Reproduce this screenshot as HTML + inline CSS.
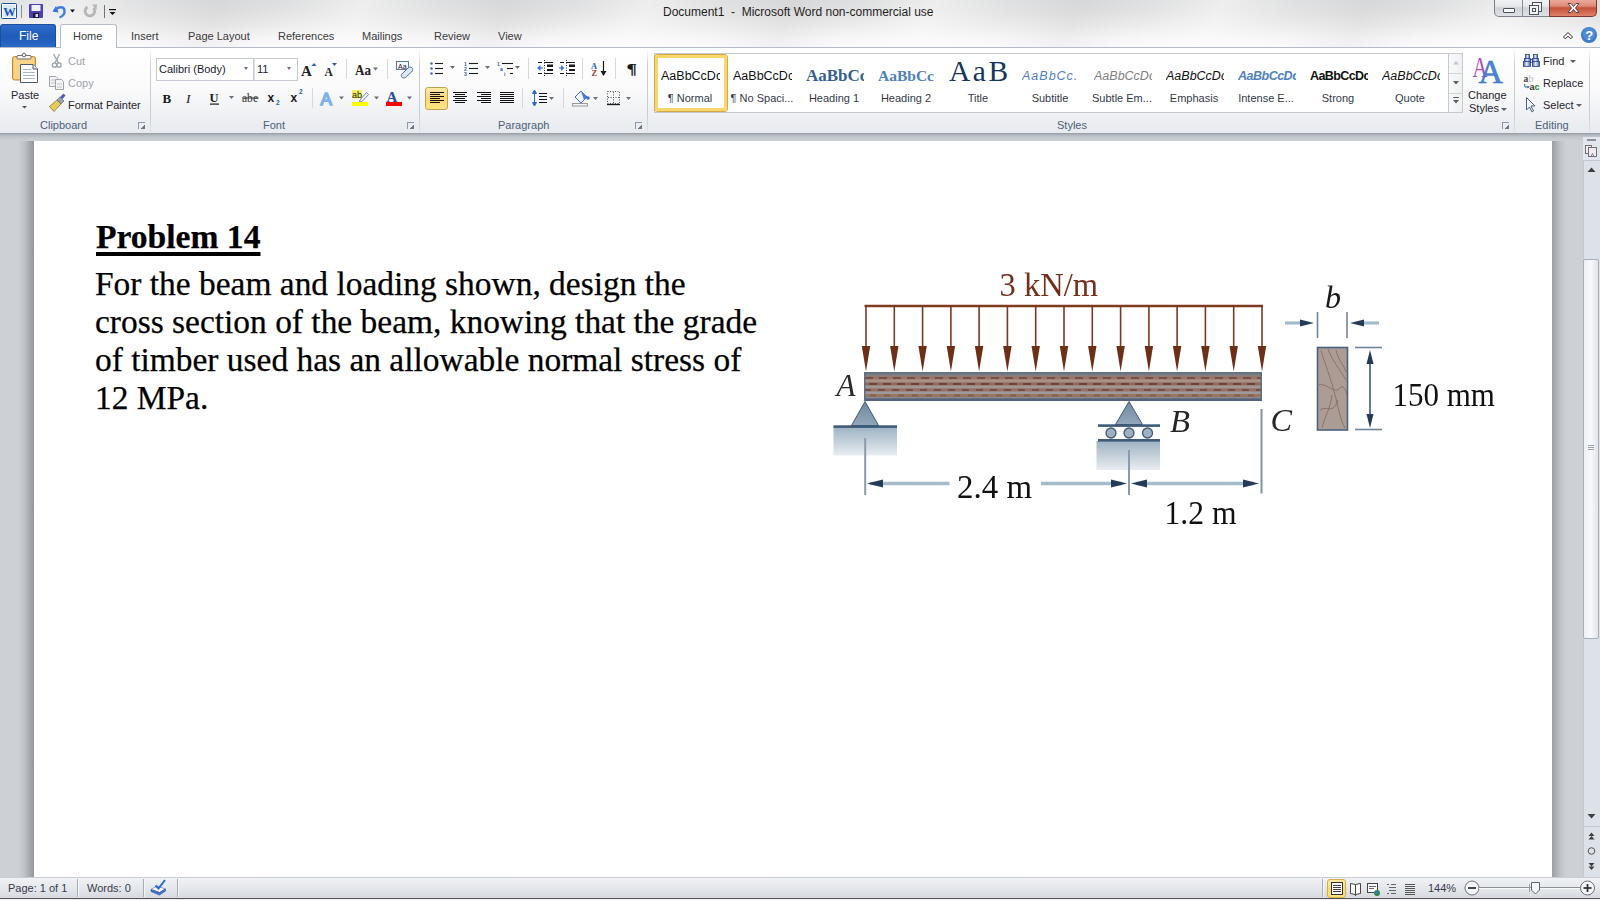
<!DOCTYPE html>
<html><head><meta charset="utf-8">
<style>
*{margin:0;padding:0;box-sizing:border-box}
html,body{width:1600px;height:900px;overflow:hidden;background:#cdd0d5;font-family:"Liberation Sans",sans-serif;font-size:11px;color:#1e2a3a}
.a{position:absolute}
#title{left:0;top:0;width:1600px;height:47px;background:repeating-linear-gradient(115deg,rgba(255,255,255,0) 0px,rgba(255,255,255,.45) 70px,rgba(255,255,255,0) 140px,rgba(0,0,0,.035) 200px,rgba(255,255,255,0) 260px),linear-gradient(180deg,#dedfe0 0%,#e3e3e4 25%,#ececed 55%,#f6f6f7 80%,#fbfbfb 100%)}
#tabs{display:none}
#ribbon{left:0;top:47px;width:1600px;height:86px;background:linear-gradient(180deg,#ffffff 0%,#fbfbfc 45%,#eef0f3 80%,#e7eaee 100%);border-top:1px solid #b6bcc6}
#rbot{left:0;top:133px;width:1600px;height:8px;background:linear-gradient(180deg,#8d939b 0,#a9aeb5 1px,#c3c7cd 4px,#cdd0d5 8px)}
.tab{position:absolute;top:30px;font-size:11px;color:#3b3b3b}
.glabel{position:absolute;top:119px;font-size:11px;color:#4e5f79}
.sep{position:absolute;top:49px;width:1px;height:83px;background:linear-gradient(180deg,rgba(200,205,212,0),#c8cdd4 20%,#c8cdd4 80%,rgba(200,205,212,.3))}
.dl{position:absolute;top:122px;width:7px;height:7px;border-left:1px solid #8e98a6;border-top:1px solid #8e98a6}
.dl:after{content:"";position:absolute;left:2px;top:2px;width:4px;height:4px;background:linear-gradient(135deg,transparent 45%,#6c7686 46%)}
.vsep{position:absolute;width:1px;background:#d3d7dd}
.dd{position:absolute;width:0;height:0;border-left:3px solid transparent;border-right:3px solid transparent;border-top:3px solid #5a5f66}
#page{left:34px;top:141px;width:1518px;height:736px;background:#fff}
#vscroll{left:1583px;top:137px;width:17px;height:740px;background:#dde1e8;border-left:1px solid #c5cad2}
#status{left:0;top:877px;width:1600px;height:23px;background:linear-gradient(180deg,#a4aab3 0,#f0f2f5 1px,#e4e7eb 50%,#d3d7dd 100%)}
.st{position:absolute;top:882px;font-size:11px;color:#3a3a4a}
.doc{position:absolute;font-family:"Liberation Serif",serif;color:#000;white-space:nowrap;-webkit-text-stroke:0.25px #000}
.sty{position:absolute;font-size:13px;white-space:nowrap;overflow:hidden}
.styl{position:absolute;top:92px;font-size:11px;color:#323a48;white-space:nowrap;text-align:center;width:72px}
</style></head><body>
<div id="title" class="a"></div>
<div id="tabs" class="a"></div>
<div id="ribbon" class="a"></div>
<div id="rbot" class="a"></div>
<div class="a" style="left:18px;top:141px;width:16px;height:736px;background:linear-gradient(90deg,rgba(150,155,162,0) 0%,rgba(150,155,162,.25) 40%,rgba(140,145,152,.8) 90%,#8f949b 100%)"></div>
<div class="a" style="left:1552px;top:141px;width:14px;height:736px;background:linear-gradient(90deg,#9aa0a7 0%,rgba(150,155,162,.7) 20%,rgba(150,155,162,.25) 60%,rgba(150,155,162,0) 100%)"></div>
<div id="page" class="a"></div>
<!-- scrollbar -->
<div id="vscroll" class="a"></div>
<div class="a" style="left:1583px;top:137px;width:17px;height:24px;background:#e3e6ec;border-bottom:1px solid #c3c8d0"></div>
<div class="a" style="left:1587px;top:139px;width:9px;height:2px;background:#8c9098"></div>
<svg class="a" style="left:1583px;top:143px" width="17" height="16" viewBox="0 0 17 16">
<rect x="2.5" y="2.5" width="6" height="8" fill="#f2eaf2" stroke="#666" stroke-width="0.9"/>
<rect x="5.5" y="4.5" width="8" height="9" fill="#f2eaf2" stroke="#666" stroke-width="0.9"/>
<path d="M8 13.5 L9.5 10.5 L11 13.5" fill="none" stroke="#666" stroke-width="0.8"/>
</svg>
<svg class="a" style="left:1583px;top:161px" width="17" height="716" viewBox="0 0 17 716">
<path d="M4.5 11 L12.5 11 L8.5 6.5 Z" fill="#3d3f44"/>
<rect x="0.5" y="98.5" width="15" height="379" rx="1.5" fill="url(#thumbg)" stroke="#a9afb8" stroke-width="1"/>
<defs><linearGradient id="thumbg" x1="0" y1="0" x2="1" y2="0"><stop offset="0" stop-color="#eef0f4"/><stop offset="0.5" stop-color="#f7f8fa"/><stop offset="1" stop-color="#dfe3ea"/></linearGradient></defs>
<g stroke="#9aa0a8" stroke-width="1"><line x1="5" y1="284.5" x2="11" y2="284.5"/><line x1="5" y1="286.5" x2="11" y2="286.5"/><line x1="5" y1="288.5" x2="11" y2="288.5"/></g>
<path d="M4.5 653 L12.5 653 L8.5 657.5 Z" fill="#3d3f44"/>
<line x1="0" y1="665.5" x2="17" y2="665.5" stroke="#c3c8d0"/>
<path d="M5.5 675 L11.5 675 L8.5 671.5 Z M5.5 678.5 L11.5 678.5 L8.5 675 Z" fill="#3d3f44"/>
<circle cx="8.5" cy="690" r="3.3" fill="none" stroke="#555" stroke-width="1"/>
<path d="M5.5 702 L11.5 702 L8.5 705.5 Z M5.5 705.5 L11.5 705.5 L8.5 709 Z" fill="#3d3f44"/>
</svg>
<div id="status" class="a"></div>

<!-- QAT -->
<svg class="a" style="left:0;top:0" width="130" height="24" viewBox="0 0 130 24">
<rect x="1.5" y="3.5" width="15" height="15" rx="1" fill="#fff" stroke="#1f4f9a" stroke-width="1"/>
<rect x="3" y="5" width="12" height="12" fill="#dbe7f7"/>
<text x="3.2" y="15.5" font-family="Liberation Serif" font-weight="bold" font-size="12.5" fill="#1552b8">W</text>
<line x1="21.5" y1="5" x2="21.5" y2="18" stroke="#8a8f96" stroke-width="1"/>
<rect x="29" y="4" width="14" height="14" rx="1" fill="#4a3fb5"/>
<rect x="31.5" y="5" width="9" height="6" fill="#eef2fb"/>
<rect x="33" y="13" width="6" height="5" fill="#1b1b3a"/>
<rect x="35.5" y="14" width="2.5" height="3" fill="#d8dce8"/>
<path d="M56 6 L52.5 11.5 L58.5 12.5 Z" fill="#2c6fd8"/>
<path d="M55.5 10 C58 6.5 64 6 64.5 10.5 C65 14 62 16.5 59.5 17.5" fill="none" stroke="#3b7ee0" stroke-width="2.4"/>
<path d="M70 9.5 L75 9.5 L72.5 12.5 Z" fill="#111"/>
<path d="M93.5 8 A4.8 4.8 0 1 1 87.5 7" fill="none" stroke="#b5b5b5" stroke-width="2.8"/>
<path d="M92 4.5 L97 4.5 L96.5 10 Z" fill="#b5b5b5"/>
<line x1="104.5" y1="5" x2="104.5" y2="18" stroke="#6f747b" stroke-width="1"/>
<rect x="109" y="9" width="7" height="1.2" fill="#111"/>
<path d="M109.5 12 L115.5 12 L112.5 15 Z" fill="#111"/>
</svg>
<!-- window buttons -->
<div class="a" style="left:1494px;top:-2px;width:56px;height:19px;border:1px solid #7c8088;border-top:none;border-radius:0 0 0 5px;background:linear-gradient(180deg,#f3f4f6 0%,#e7e9ec 45%,#cfd2d7 55%,#dfe2e6 100%)"></div>
<div class="a" style="left:1522px;top:0;width:1px;height:17px;background:#8a8e95"></div>
<div class="a" style="left:1549px;top:-2px;width:48px;height:19px;border:1px solid #7a3a30;border-top:none;border-radius:0 0 5px 0;background:linear-gradient(180deg,#efb3a6 0%,#df8a78 45%,#c4503a 55%,#e0826a 100%)"></div>
<svg class="a" style="left:1494px;top:0" width="106" height="20" viewBox="0 0 106 20">
<rect x="9.5" y="8.5" width="11" height="4" rx="0.5" fill="#f7f7f8" stroke="#4b5260" stroke-width="1"/>
<rect x="38.5" y="2.5" width="9" height="9" fill="#f2f2f4" stroke="#4b5260" stroke-width="1"/>
<rect x="35.5" y="5.5" width="9" height="9" fill="#f2f2f4" stroke="#4b5260" stroke-width="1"/>
<rect x="38.5" y="8.5" width="3" height="3" fill="none" stroke="#4b5260" stroke-width="1"/>
<path d="M74 3.5 L77 3.5 L79.5 6.5 L82 3.5 L85 3.5 L81.5 8 L85 12.5 L82 12.5 L79.5 9.5 L77 12.5 L74 12.5 L77.5 8 Z" fill="#f7f4f4" stroke="#4e3a3a" stroke-width="0.9"/>
</svg>
<svg class="a" style="left:1560px;top:26px" width="40" height="20" viewBox="0 0 40 20">
<path d="M3.5 11 L8 6.5 L12.5 11 L10.8 12.8 L8 10.2 L5.2 12.8 Z" fill="#fff" stroke="#2a2a2a" stroke-width="1" stroke-linejoin="round"/>
<circle cx="29" cy="9" r="8" fill="#3c78c8"/>
<circle cx="29" cy="8" r="6.5" fill="#4f8ad6"/>
<text x="25.2" y="14" font-family="Liberation Sans" font-weight="bold" font-size="13" fill="#fff">?</text>
</svg>
<!-- title text -->
<div class="a" style="left:663px;top:5px;font-size:12px;color:#1f1f1f;white-space:nowrap">Document1&nbsp; - &nbsp;Microsoft Word non-commercial use</div>

<!-- tabs -->
<div class="a" style="left:0;top:24px;width:56px;height:23px;background:linear-gradient(180deg,#2f6bcb 0%,#1f5bb9 50%,#2b69c6 100%);border-radius:3px 3px 0 0;border:1px solid #1c4e9c;border-bottom:none"></div>
<div class="a" style="left:19px;top:29px;font-size:12px;color:#fff">File</div>
<div class="a" style="left:60px;top:24px;width:57px;height:24px;background:#fff;border:1px solid #b6bcc6;border-bottom:none;border-radius:3px 3px 0 0"></div>
<div class="tab" style="left:73px">Home</div>
<div class="tab" style="left:131px">Insert</div>
<div class="tab" style="left:188px">Page Layout</div>
<div class="tab" style="left:278px">References</div>
<div class="tab" style="left:362px">Mailings</div>
<div class="tab" style="left:434px">Review</div>
<div class="tab" style="left:498px">View</div>

<!-- clipboard group -->
<svg class="a" style="left:0;top:48px" width="150" height="70" viewBox="0 48 150 70">
<rect x="12.5" y="56.5" width="23" height="23.5" rx="2" fill="#f2c56c" stroke="#c08a35" stroke-width="1"/>
<rect x="14" y="58" width="20" height="21" fill="#f7d588"/>
<rect x="17" y="55.5" width="14" height="3.5" rx="1" fill="#f4f4f4" stroke="#6f6f6f" stroke-width="1"/>
<circle cx="24" cy="55" r="1.8" fill="#f4f4f4" stroke="#6f6f6f" stroke-width="1"/>
<path d="M20.5 64.5 L33 64.5 L37.5 69 L37.5 82.5 L20.5 82.5 Z" fill="#fff" stroke="#4d5b73" stroke-width="1"/>
<path d="M33 64.5 L33 69 L37.5 69" fill="#e3e8ef" stroke="#4d5b73" stroke-width="1"/>
<g stroke="#a9b6c8" stroke-width="1"><line x1="23" y1="69.5" x2="31" y2="69.5"/><line x1="23" y1="72.5" x2="35" y2="72.5"/><line x1="23" y1="75.5" x2="35" y2="75.5"/><line x1="23" y1="78.5" x2="35" y2="78.5"/></g>
<path d="M22 106 L27 106 L24.5 108.5 Z" fill="#4a4f57"/>
<g stroke="#9aa0a8" stroke-width="1.3" fill="none"><line x1="53.5" y1="54" x2="58.5" y2="63"/><line x1="59.5" y1="54" x2="55" y2="63"/><circle cx="54.5" cy="65" r="2.2"/><circle cx="59" cy="65" r="2.2"/></g>
<path d="M49.5 76.5 L56 76.5 L58 78.5 L58 86.5 L49.5 86.5 Z" fill="#f4f4f4" stroke="#a0a5ad" stroke-width="1"/>
<path d="M55.5 79.5 L61.5 79.5 L63.5 81.5 L63.5 89.5 L55.5 89.5 Z" fill="#f4f4f4" stroke="#a0a5ad" stroke-width="1"/>
<g stroke="#c0c4ca" stroke-width="1"><line x1="51" y1="80" x2="55" y2="80"/><line x1="51" y1="83" x2="55" y2="83"/><line x1="57" y1="84" x2="62" y2="84"/><line x1="57" y1="87" x2="62" y2="87"/></g>
<path d="M49.5 106.5 L57 100 L61 104 L54 111.5 Z" fill="#e8c95c" stroke="#8d7a2a" stroke-width="0.8"/>
<path d="M57 100 L60 97 L64 101 L61 104 Z" fill="#9aa2ad" stroke="#555" stroke-width="0.6"/>
<path d="M60 97 L63.5 93.5 L65.5 95.5 L62.5 99 Z" fill="#5a56c0"/>
</svg>
<div class="a" style="left:11px;top:89px;font-size:11px;color:#26262b">Paste</div>
<div class="a" style="left:68px;top:55px;font-size:11px;color:#9ea3ab">Cut</div>
<div class="a" style="left:68px;top:77px;font-size:11px;color:#9ea3ab">Copy</div>
<div class="a" style="left:68px;top:99px;font-size:11px;color:#26262b">Format Painter</div>
<!-- font group -->
<div class="a" style="left:156px;top:58px;width:98px;height:23px;background:#fff;border:1px solid #c5cad2"></div>
<div class="a" style="left:254px;top:58px;width:44px;height:23px;background:#fff;border:1px solid #c5cad2;border-left:1px solid #dde0e5"></div>
<div class="a" style="left:159px;top:63px;font-size:11px;color:#1b1b2e">Calibri (Body)</div>
<div class="a" style="left:257px;top:63px;font-size:11px;color:#1b1b2e">11</div>
<div class="dd" style="left:244px;top:67px;border-left-width:2.5px;border-right-width:2.5px;border-top-color:#6a6f78"></div>
<div class="dd" style="left:287px;top:67px;border-left-width:2.5px;border-right-width:2.5px;border-top-color:#6a6f78"></div>
<svg class="a" style="left:150px;top:48px" width="270" height="70" viewBox="150 48 270 70">
<text x="301" y="75.5" font-family="Liberation Serif" font-weight="bold" font-size="15" fill="#222">A</text>
<path d="M311.5 66 L314 63 L316.5 66 Z" fill="#2a5cb0"/>
<text x="324.5" y="75.5" font-family="Liberation Serif" font-weight="bold" font-size="11.5" fill="#222">A</text>
<path d="M332 63 L337 63 L334.5 66 Z" fill="#2a5cb0"/>
<line x1="346.5" y1="59" x2="346.5" y2="79" stroke="#d5d9de"/>
<text x="355" y="74.5" font-family="Liberation Serif" font-weight="bold" font-size="14" fill="#222" textLength="16" lengthAdjust="spacingAndGlyphs">Aa</text>
<path d="M373 67.5 L378 67.5 L375.5 70.5 Z" fill="#6a6f78"/>
<line x1="387.5" y1="59" x2="387.5" y2="79" stroke="#d5d9de"/>
<rect x="396.5" y="61.5" width="12" height="8" fill="#f4f7fb" stroke="#5a78a8" stroke-width="1"/>
<text x="398" y="68.5" font-family="Liberation Sans" font-size="7" fill="#222">Aa</text>
<path d="M402 74 L408 68 C409.5 66.5 412 67 412.5 68.5 C413 70 412.5 71 411.5 72 L405.5 77.5 C404 78.5 402 78 401.5 76.5 C401 75.5 401.3 74.7 402 74 Z" fill="#dde6f2" stroke="#4e6f9e" stroke-width="1"/>
<text x="162.5" y="102.5" font-family="Liberation Serif" font-weight="bold" font-size="13" fill="#1a1a1a">B</text>
<text x="186" y="102.5" font-family="Liberation Serif" font-style="italic" font-size="13.5" fill="#1a1a1a">I</text>
<text x="209.5" y="102" font-family="Liberation Serif" font-weight="bold" font-size="12.5" fill="#1a1a1a">U</text>
<rect x="210" y="103.5" width="9" height="1.2" fill="#1a1a1a"/>
<path d="M229 96 L234 96 L231.5 99 Z" fill="#6a6f78"/>
<text x="242" y="101.5" font-family="Liberation Serif" font-size="12" fill="#333" textLength="16" lengthAdjust="spacingAndGlyphs">abe</text>
<rect x="242" y="97.5" width="16.5" height="1" fill="#333"/>
<text x="267.5" y="102" font-family="Liberation Sans" font-weight="bold" font-size="12" fill="#1a1a1a">x</text>
<text x="276" y="104.5" font-family="Liberation Sans" font-weight="bold" font-size="6.5" fill="#2a5cb0">2</text>
<text x="290.5" y="102" font-family="Liberation Sans" font-weight="bold" font-size="12" fill="#1a1a1a">x</text>
<text x="299" y="93.5" font-family="Liberation Sans" font-weight="bold" font-size="6.5" fill="#2a5cb0">2</text>
<line x1="312.5" y1="88" x2="312.5" y2="108" stroke="#d5d9de"/>
<text x="320.5" y="105" font-family="Liberation Sans" font-size="17" fill="#e3f1fc" stroke="#7fb2ea" stroke-width="1.6">A</text>
<path d="M339 96.5 L344 96.5 L341.5 99.5 Z" fill="#6a6f78"/>
<rect x="352" y="90" width="10" height="8.5" fill="#f3f05a"/>
<text x="352" y="98" font-family="Liberation Sans" font-size="9" fill="#222">ab</text>
<path d="M360 100 L366.5 92.5 L368.5 94.5 L362 101.5 L359.5 102 Z" fill="#eef3fa" stroke="#5a6f8f" stroke-width="0.8"/>
<rect x="352" y="102" width="16" height="4" fill="#ffff00"/>
<path d="M374 96.5 L379 96.5 L376.5 99.5 Z" fill="#6a6f78"/>
<text x="386.5" y="101.5" font-family="Liberation Serif" font-weight="bold" font-size="15" fill="#2b4a9a">A</text>
<rect x="386" y="102" width="16" height="4" fill="#ff0000"/>
<path d="M407 96.5 L412 96.5 L409.5 99.5 Z" fill="#6a6f78"/>
</svg>
<!-- paragraph group -->
<div class="a" style="left:425px;top:87px;width:23px;height:23px;border:1px solid #c2a24c;border-radius:3px;background:linear-gradient(180deg,#fde9a4 0%,#fcd874 50%,#fde37f 100%)"></div>
<svg class="a" style="left:420px;top:48px" width="230" height="70" viewBox="420 48 230 70">
<g fill="#3a6fc8"><circle cx="431.5" cy="63.5" r="1.3"/><circle cx="431.5" cy="68.5" r="1.3"/><circle cx="431.5" cy="73.5" r="1.3"/></g>
<g stroke="#1a1a1a" stroke-width="1.1"><line x1="435" y1="63.5" x2="443" y2="63.5"/><line x1="435" y1="68.5" x2="443" y2="68.5"/><line x1="435" y1="73.5" x2="443" y2="73.5"/></g>
<path d="M450 66 L455 66 L452.5 69 Z" fill="#6a6f78"/>
<g fill="#2a5cb0" font-family="Liberation Sans" font-weight="bold" font-size="5"><text x="464" y="66">1</text><text x="464" y="71">2</text><text x="464" y="76">3</text></g>
<g stroke="#1a1a1a" stroke-width="1.1"><line x1="469" y1="63.5" x2="478" y2="63.5"/><line x1="469" y1="68.5" x2="478" y2="68.5"/><line x1="469" y1="73.5" x2="478" y2="73.5"/></g>
<path d="M485 66 L490 66 L487.5 69 Z" fill="#6a6f78"/>
<g fill="#2a5cb0" font-family="Liberation Sans" font-weight="bold" font-size="5"><text x="497" y="66">1</text><text x="500" y="71">a</text><text x="504" y="76">i</text></g>
<g stroke="#1a1a1a" stroke-width="1.1"><line x1="502" y1="63.5" x2="513" y2="63.5"/><line x1="507" y1="68.5" x2="513" y2="68.5"/><line x1="510" y1="73.5" x2="513" y2="73.5"/></g>
<path d="M515 66 L520 66 L517.5 69 Z" fill="#6a6f78"/>
<line x1="528.5" y1="58" x2="528.5" y2="79" stroke="#d5d9de"/>
<g stroke="#1a1a1a" stroke-width="1"><line x1="544" y1="62.5" x2="553" y2="62.5"/><line x1="547" y1="66.5" x2="553" y2="66.5"/><line x1="547" y1="69.5" x2="553" y2="69.5"/><line x1="544" y1="73.5" x2="553" y2="73.5"/><line x1="538" y1="62.5" x2="542" y2="62.5"/><line x1="538" y1="73.5" x2="542" y2="73.5"/></g>
<rect x="547" y="64.5" width="6" height="2" fill="#1a1a1a"/><rect x="547" y="69" width="6" height="2" fill="#1a1a1a"/>
<line x1="544.5" y1="60" x2="544.5" y2="76" stroke="#1a1a1a" stroke-width="1" stroke-dasharray="1 1.5"/>
<path d="M537 68 L540.5 65 L540.5 71 Z" fill="#3a78d8"/><line x1="539" y1="68" x2="543" y2="68" stroke="#3a78d8" stroke-width="1.2"/>
<g stroke="#1a1a1a" stroke-width="1"><line x1="566" y1="62.5" x2="575" y2="62.5"/><line x1="569" y1="66.5" x2="575" y2="66.5"/><line x1="569" y1="69.5" x2="575" y2="69.5"/><line x1="566" y1="73.5" x2="575" y2="73.5"/><line x1="560" y1="62.5" x2="564" y2="62.5"/><line x1="560" y1="73.5" x2="564" y2="73.5"/></g>
<rect x="569" y="64.5" width="6" height="2" fill="#1a1a1a"/><rect x="569" y="69" width="6" height="2" fill="#1a1a1a"/>
<line x1="566.5" y1="60" x2="566.5" y2="76" stroke="#1a1a1a" stroke-width="1" stroke-dasharray="1 1.5"/>
<path d="M564.5 68 L561 65 L561 71 Z" fill="#3a78d8"/><line x1="559" y1="68" x2="562" y2="68" stroke="#3a78d8" stroke-width="1.2"/>
<line x1="582.5" y1="58" x2="582.5" y2="79" stroke="#d5d9de"/>
<text x="591" y="68.5" font-family="Liberation Serif" font-weight="bold" font-size="8.5" fill="#2a5cb0">A</text>
<text x="591.5" y="76" font-family="Liberation Serif" font-weight="bold" font-size="8.5" fill="#a33a2a">Z</text>
<line x1="603.5" y1="61" x2="603.5" y2="75" stroke="#1a1a1a" stroke-width="1.2"/>
<path d="M600.5 71 L606.5 71 L603.5 76 Z" fill="#1a1a1a"/>
<line x1="615.5" y1="58" x2="615.5" y2="79" stroke="#d5d9de"/>
<text x="626.5" y="74" font-family="Liberation Serif" font-weight="bold" font-size="15" fill="#1a1a1a" textLength="10.5" lengthAdjust="spacingAndGlyphs">&#182;</text>
<g stroke="#111" stroke-width="1"><line x1="430" y1="92.5" x2="444" y2="92.5"/><line x1="430" y1="94.5" x2="440" y2="94.5"/><line x1="430" y1="96.5" x2="444" y2="96.5"/><line x1="430" y1="98.5" x2="440" y2="98.5"/><line x1="430" y1="100.5" x2="444" y2="100.5"/><line x1="430" y1="102.5" x2="440" y2="102.5"/></g>
<g stroke="#111" stroke-width="1"><line x1="453" y1="92.5" x2="467" y2="92.5"/><line x1="455" y1="94.5" x2="465" y2="94.5"/><line x1="453" y1="96.5" x2="467" y2="96.5"/><line x1="455" y1="98.5" x2="465" y2="98.5"/><line x1="453" y1="100.5" x2="467" y2="100.5"/><line x1="455" y1="102.5" x2="465" y2="102.5"/></g>
<g stroke="#111" stroke-width="1"><line x1="477" y1="92.5" x2="491" y2="92.5"/><line x1="481" y1="94.5" x2="491" y2="94.5"/><line x1="477" y1="96.5" x2="491" y2="96.5"/><line x1="481" y1="98.5" x2="491" y2="98.5"/><line x1="477" y1="100.5" x2="491" y2="100.5"/><line x1="481" y1="102.5" x2="491" y2="102.5"/></g>
<g stroke="#111" stroke-width="1"><line x1="500" y1="92.5" x2="514" y2="92.5"/><line x1="500" y1="94.5" x2="514" y2="94.5"/><line x1="500" y1="96.5" x2="514" y2="96.5"/><line x1="500" y1="98.5" x2="514" y2="98.5"/><line x1="500" y1="100.5" x2="514" y2="100.5"/><line x1="500" y1="102.5" x2="514" y2="102.5"/></g>
<line x1="522.5" y1="88" x2="522.5" y2="108" stroke="#d5d9de"/>
<g stroke="#2a6ad0" stroke-width="1" fill="#2a6ad0"><line x1="534.5" y1="92" x2="534.5" y2="104"/><path d="M532.5 93.5 L534.5 90 L536.5 93.5 Z"/><path d="M532.5 102.5 L534.5 106 L536.5 102.5 Z"/></g>
<g stroke="#111" stroke-width="1"><line x1="539" y1="93.5" x2="547" y2="93.5"/><line x1="539" y1="96.5" x2="547" y2="96.5"/><line x1="539" y1="99.5" x2="547" y2="99.5"/><line x1="539" y1="102.5" x2="547" y2="102.5"/></g>
<path d="M549 97 L554 97 L551.5 100 Z" fill="#6a6f78"/>
<line x1="563.5" y1="88" x2="563.5" y2="108" stroke="#d5d9de"/>
<path d="M575 97 L581 91 L587 97 L581 103 Z" fill="#f4f6fa" stroke="#3a6fc8" stroke-width="1"/>
<path d="M581 91 L587 97 L584 100 Z" fill="#4a80d0"/>
<circle cx="588" cy="98" r="1.8" fill="#3a6fc8"/>
<rect x="572.5" y="103.5" width="15" height="2.5" fill="#f6f6f6" stroke="#999" stroke-width="1"/>
<path d="M593 97 L598 97 L595.5 100 Z" fill="#6a6f78"/>
<g stroke="#555" stroke-width="1" stroke-dasharray="1 1.5" fill="none"><rect x="607.5" y="91.5" width="12" height="12"/><line x1="613.5" y1="92" x2="613.5" y2="103"/><line x1="608" y1="97.5" x2="619" y2="97.5"/></g>
<line x1="607" y1="104.5" x2="620" y2="104.5" stroke="#1a1a1a" stroke-width="1.3"/>
<path d="M626 97 L631 97 L628.5 100 Z" fill="#6a6f78"/>
</svg>
<!-- styles group -->
<div class="a" style="left:654px;top:53px;width:809px;height:60px;background:#fff;border:1px solid #c5cad2"></div>
<div class="a" style="left:655px;top:55px;width:72px;height:56px;border:3px solid #f9d66b;border-radius:3px;box-shadow:0 0 0 1px #d6a948"></div>
<div class="a" style="left:1448px;top:53px;width:15px;height:60px;border:1px solid #c5cad2;border-radius:0 2px 2px 0;background:linear-gradient(90deg,#f8f9fa,#eef0f3)"></div>
<div class="a" style="left:1449px;top:73px;width:14px;height:1px;background:#cfd3da"></div>
<div class="a" style="left:1449px;top:93px;width:14px;height:1px;background:#cfd3da"></div>
<svg class="a" style="left:1448px;top:53px" width="16" height="60" viewBox="0 0 16 60">
<path d="M5 11.5 L11 11.5 L8 8 Z" fill="#c3c7cd"/>
<path d="M5 28 L11 28 L8 31.5 Z" fill="#5a5f66"/>
<rect x="5" y="44" width="6" height="1" fill="#5a5f66"/>
<path d="M5 47 L11 47 L8 50.5 Z" fill="#5a5f66"/>
</svg>
<div class="sty" style="left:661px;top:69px;width:59px;color:#111;font-size:12.5px">AaBbCcDc</div>
<div class="sty" style="left:733px;top:69px;width:59px;color:#111;font-size:12.5px">AaBbCcDc</div>
<div class="sty" style="left:806px;top:66px;width:58px;color:#365f91;font-family:'Liberation Serif',serif;font-weight:bold;font-size:17px">AaBbCc</div>
<div class="sty" style="left:878px;top:67px;width:58px;color:#4f81bd;font-family:'Liberation Serif',serif;font-weight:bold;font-size:15.5px">AaBbCc</div>
<div class="sty" style="left:949px;top:55px;width:60px;color:#17365d;font-family:'Liberation Serif',serif;font-size:29.5px;line-height:32px;letter-spacing:2.5px">AaB</div>
<div class="sty" style="left:1022px;top:69px;width:58px;color:#4f81bd;font-style:italic;font-size:12.5px;letter-spacing:1px">AaBbCc.</div>
<div class="sty" style="left:1094px;top:69px;width:58px;color:#808080;font-style:italic;font-size:12.5px">AaBbCcDc</div>
<div class="sty" style="left:1166px;top:69px;width:58px;color:#111;font-style:italic;font-size:12.5px">AaBbCcDc</div>
<div class="sty" style="left:1238px;top:69px;width:58px;color:#4f81bd;font-style:italic;font-weight:bold;font-size:12.5px;letter-spacing:-0.5px">AaBbCcDc</div>
<div class="sty" style="left:1310px;top:69px;width:58px;color:#111;font-weight:bold;font-size:12.5px;letter-spacing:-0.6px">AaBbCcDc</div>
<div class="sty" style="left:1382px;top:69px;width:58px;color:#111;font-style:italic;font-size:12.5px">AaBbCcDc</div>
<div class="styl" style="left:654px">&#182; Normal</div>
<div class="styl" style="left:726px">&#182; No Spaci...</div>
<div class="styl" style="left:798px">Heading 1</div>
<div class="styl" style="left:870px">Heading 2</div>
<div class="styl" style="left:942px">Title</div>
<div class="styl" style="left:1014px">Subtitle</div>
<div class="styl" style="left:1086px">Subtle Em...</div>
<div class="styl" style="left:1158px">Emphasis</div>
<div class="styl" style="left:1230px">Intense E...</div>
<div class="styl" style="left:1302px">Strong</div>
<div class="styl" style="left:1374px">Quote</div>
<svg class="a" style="left:1465px;top:50px" width="50" height="35" viewBox="1465 50 50 35">
<text x="1472.5" y="76.5" font-family="Liberation Serif" font-size="30" fill="#b04cc0" textLength="15" lengthAdjust="spacingAndGlyphs">A</text>
<text x="1478.5" y="82.5" font-family="Liberation Serif" font-size="33" fill="#4a86d8" stroke="#2f6cc4" stroke-width="0.5" textLength="24.5" lengthAdjust="spacingAndGlyphs">A</text>
</svg>
<div class="a" style="left:1468px;top:89px;font-size:11px;color:#26262b">Change</div>
<div class="a" style="left:1469px;top:102px;font-size:11px;color:#26262b">Styles</div>
<div class="dd" style="left:1501px;top:108px;border-top-color:#5a5f66"></div>
<!-- editing group -->
<svg class="a" style="left:1520px;top:50px" width="70" height="65" viewBox="1520 50 70 65">
<defs><linearGradient id="binog" x1="0" y1="0" x2="1" y2="0"><stop offset="0" stop-color="#3d5fa8"/><stop offset="0.45" stop-color="#e8eefa"/><stop offset="1" stop-color="#3a5aa0"/></linearGradient></defs>
<g fill="url(#binog)" stroke="#2a4890" stroke-width="0.8">
<rect x="1525.5" y="54.5" width="4" height="4"/><rect x="1533.5" y="54.5" width="4" height="4"/>
<rect x="1524.5" y="58.5" width="6" height="3"/><rect x="1532.5" y="58.5" width="6" height="3"/>
<rect x="1523.5" y="61.5" width="7" height="5"/><rect x="1532.5" y="61.5" width="7" height="5"/>
<rect x="1530.5" y="59.5" width="2" height="3"/>
</g>
<text x="1523.5" y="82" font-family="Liberation Serif" font-weight="bold" font-size="9.5" fill="#444">a</text>
<text x="1528.5" y="82" font-family="Liberation Serif" font-size="10" fill="#b8b8b8">b</text>
<path d="M1524.5 84 L1525 87 L1528.5 87" fill="none" stroke="#2f5aa8" stroke-width="1"/>
<path d="M1527.5 85.5 L1529.5 87 L1527.5 88.5 Z" fill="#2f5aa8"/>
<text x="1529.5" y="90" font-family="Liberation Sans" font-weight="bold" font-size="9" fill="#333">a</text>
<text x="1534.5" y="90" font-family="Liberation Sans" font-weight="bold" font-size="9" fill="#1a8a1a">c</text>
<path d="M1526.5 97.5 L1526.5 110 L1529.5 107 L1532 112 L1533.5 111 L1531 106 L1535 106 Z" fill="#f4f7fc" stroke="#3b5078" stroke-width="0.9" stroke-linejoin="round"/>
</svg>
<div class="a" style="left:1543px;top:55px;font-size:11px;color:#26262b">Find</div>
<div class="dd" style="left:1570px;top:60px;border-top-color:#5a5f66"></div>
<div class="a" style="left:1543px;top:77px;font-size:11px;color:#26262b">Replace</div>
<div class="a" style="left:1543px;top:99px;font-size:11px;color:#26262b">Select</div>
<div class="dd" style="left:1576px;top:104px;border-top-color:#5a5f66"></div>
<!-- group labels -->
<div class="glabel" style="left:40px">Clipboard</div>
<div class="glabel" style="left:263px">Font</div>
<div class="glabel" style="left:498px">Paragraph</div>
<div class="glabel" style="left:1057px">Styles</div>
<div class="glabel" style="left:1535px">Editing</div>
<div class="sep" style="left:150px"></div>
<div class="sep" style="left:419px"></div>
<div class="sep" style="left:647px"></div>
<div class="sep" style="left:1514px"></div>
<div class="sep" style="left:1589px"></div>
<div class="dl" style="left:138px"></div>
<div class="dl" style="left:407px"></div>
<div class="dl" style="left:635px"></div>
<div class="dl" style="left:1502px"></div>

<!-- document text -->
<div class="doc" style="left:96px;top:218px;font-size:33.6px;font-weight:bold;text-decoration:underline;text-decoration-thickness:4px;text-underline-offset:4px">Problem 14</div>
<div class="doc" style="left:95px;top:265px;font-size:33.45px;line-height:38.15px">For the beam and loading shown, design the<br>cross section of the beam, knowing that the grade<br>of timber used has an allowable normal stress of<br>12 MPa.</div>

<!-- diagram -->
<svg class="a" style="left:0;top:0;filter:blur(0.35px)" width="1600" height="900" viewBox="0 0 1600 900">
<defs>
<linearGradient id="gnd" x1="0" y1="0" x2="0" y2="1"><stop offset="0" stop-color="#9fb3c4"/><stop offset="0.5" stop-color="#c3d0da"/><stop offset="1" stop-color="#e8edf1"/></linearGradient>
<linearGradient id="tri" x1="0" y1="0" x2="0" y2="1"><stop offset="0" stop-color="#6f889f"/><stop offset="1" stop-color="#93a8ba"/></linearGradient>
<pattern id="wood" x="864" y="372" width="14" height="29" patternUnits="userSpaceOnUse">
<rect width="14" height="29" fill="#967c70"/>
<rect y="0" width="14" height="2.5" fill="#65727f"/>
<rect y="2.5" width="14" height="2" fill="#7f7f85"/>
<rect y="4.5" width="14" height="3" fill="#98766a"/><rect x="1" y="5" width="8" height="2" fill="#7a4e42"/>
<rect y="7.5" width="14" height="3" fill="#a99186"/>
<rect y="10.5" width="14" height="3" fill="#8f6b5e"/><rect x="5" y="11" width="8" height="2" fill="#6e4238"/>
<rect y="13.5" width="14" height="3" fill="#a09793"/>
<rect y="16.5" width="14" height="3" fill="#947266"/><rect x="0" y="17" width="7" height="2" fill="#784e43"/>
<rect y="19.5" width="14" height="2.5" fill="#9e999c"/>
<rect y="22" width="14" height="3" fill="#98765f"/><rect x="6" y="22.5" width="6" height="2" fill="#84604c"/>
<rect y="25" width="14" height="1.5" fill="#858894"/>
<rect y="26.5" width="14" height="2.5" fill="#52637b"/>
</pattern>
</defs>
<text x="999.5" y="296.3" font-family="Liberation Serif" font-size="33.5" fill="#73301a" textLength="98.5" lengthAdjust="spacingAndGlyphs">3 kN/m</text>
<line x1="864.5" y1="306" x2="1263" y2="306" stroke="#7f3b1f" stroke-width="2.4"/>
<line x1="866.0" y1="306" x2="866.0" y2="348" stroke="#7a3a20" stroke-width="1.6"/>
<path d="M861.8 346 L870.2 346 L866.0 371.5 Z" fill="#6e2f17"/>
<line x1="894.3" y1="306" x2="894.3" y2="348" stroke="#7a3a20" stroke-width="1.6"/>
<path d="M890.1 346 L898.5 346 L894.3 371.5 Z" fill="#6e2f17"/>
<line x1="922.6" y1="306" x2="922.6" y2="348" stroke="#7a3a20" stroke-width="1.6"/>
<path d="M918.4 346 L926.8 346 L922.6 371.5 Z" fill="#6e2f17"/>
<line x1="950.9" y1="306" x2="950.9" y2="348" stroke="#7a3a20" stroke-width="1.6"/>
<path d="M946.7 346 L955.1 346 L950.9 371.5 Z" fill="#6e2f17"/>
<line x1="979.1" y1="306" x2="979.1" y2="348" stroke="#7a3a20" stroke-width="1.6"/>
<path d="M974.9 346 L983.3 346 L979.1 371.5 Z" fill="#6e2f17"/>
<line x1="1007.4" y1="306" x2="1007.4" y2="348" stroke="#7a3a20" stroke-width="1.6"/>
<path d="M1003.2 346 L1011.6 346 L1007.4 371.5 Z" fill="#6e2f17"/>
<line x1="1035.7" y1="306" x2="1035.7" y2="348" stroke="#7a3a20" stroke-width="1.6"/>
<path d="M1031.5 346 L1039.9 346 L1035.7 371.5 Z" fill="#6e2f17"/>
<line x1="1064.0" y1="306" x2="1064.0" y2="348" stroke="#7a3a20" stroke-width="1.6"/>
<path d="M1059.8 346 L1068.2 346 L1064.0 371.5 Z" fill="#6e2f17"/>
<line x1="1092.3" y1="306" x2="1092.3" y2="348" stroke="#7a3a20" stroke-width="1.6"/>
<path d="M1088.1 346 L1096.5 346 L1092.3 371.5 Z" fill="#6e2f17"/>
<line x1="1120.6" y1="306" x2="1120.6" y2="348" stroke="#7a3a20" stroke-width="1.6"/>
<path d="M1116.4 346 L1124.8 346 L1120.6 371.5 Z" fill="#6e2f17"/>
<line x1="1148.9" y1="306" x2="1148.9" y2="348" stroke="#7a3a20" stroke-width="1.6"/>
<path d="M1144.7 346 L1153.1 346 L1148.9 371.5 Z" fill="#6e2f17"/>
<line x1="1177.1" y1="306" x2="1177.1" y2="348" stroke="#7a3a20" stroke-width="1.6"/>
<path d="M1172.9 346 L1181.3 346 L1177.1 371.5 Z" fill="#6e2f17"/>
<line x1="1205.4" y1="306" x2="1205.4" y2="348" stroke="#7a3a20" stroke-width="1.6"/>
<path d="M1201.2 346 L1209.6 346 L1205.4 371.5 Z" fill="#6e2f17"/>
<line x1="1233.7" y1="306" x2="1233.7" y2="348" stroke="#7a3a20" stroke-width="1.6"/>
<path d="M1229.5 346 L1237.9 346 L1233.7 371.5 Z" fill="#6e2f17"/>
<line x1="1262.0" y1="306" x2="1262.0" y2="348" stroke="#7a3a20" stroke-width="1.6"/>
<path d="M1257.8 346 L1266.2 346 L1262.0 371.5 Z" fill="#6e2f17"/>
<rect x="864" y="372" width="398" height="29" fill="url(#wood)"/>
<rect x="864" y="372" width="1.5" height="29" fill="#5a6f84"/><rect x="1260.5" y="372" width="1.5" height="29" fill="#5a6f84"/>
<text x="836.5" y="396" font-family="Liberation Serif" font-style="italic" font-size="32" fill="#2a2a2a" textLength="19" lengthAdjust="spacingAndGlyphs">A</text>
<!-- support A -->
<path d="M865 401.5 L851.5 425.5 L878.5 425.5 Z" fill="url(#tri)" stroke="#3f5a74" stroke-width="1"/>
<rect x="833.5" y="427" width="63.5" height="28.5" fill="url(#gnd)"/>
<rect x="833.5" y="425.3" width="63.5" height="2.6" fill="#3e5b7a"/>
<line x1="865.2" y1="438" x2="865.2" y2="495" stroke="#8a9bb0" stroke-width="2"/>
<!-- support B -->
<path d="M1129 401.5 L1115.5 424.5 L1142.5 424.5 Z" fill="url(#tri)" stroke="#3f5a74" stroke-width="1"/>
<rect x="1098" y="424.3" width="62" height="2.6" fill="#3e5b7a"/>
<circle cx="1111" cy="433" r="5" fill="#9fb1c1" stroke="#3f5a74" stroke-width="1.3"/>
<circle cx="1129" cy="433" r="5" fill="#9fb1c1" stroke="#3f5a74" stroke-width="1.3"/>
<circle cx="1147.5" cy="433" r="5" fill="#9fb1c1" stroke="#3f5a74" stroke-width="1.3"/>
<rect x="1096.5" y="441" width="63.5" height="29" fill="url(#gnd)"/>
<rect x="1098" y="439" width="62" height="2.6" fill="#3e5b7a"/>
<line x1="1129" y1="450" x2="1129" y2="495" stroke="#8a9bb0" stroke-width="2"/>
<text x="1170" y="432" font-family="Liberation Serif" font-style="italic" font-size="32" fill="#262626" textLength="20" lengthAdjust="spacingAndGlyphs">B</text>
<!-- C -->
<line x1="1261.5" y1="409" x2="1261.5" y2="493.5" stroke="#7f92a8" stroke-width="2"/>
<text x="1270.5" y="431" font-family="Liberation Serif" font-style="italic" font-size="32" fill="#262626" textLength="21.5" lengthAdjust="spacingAndGlyphs">C</text>
<!-- dimension lines -->
<g stroke="#a3bccb" stroke-width="3.4">
<line x1="870" y1="483.5" x2="949.5" y2="483.5"/>
<line x1="1041" y1="483.5" x2="1122" y2="483.5"/>
<line x1="1136" y1="483.5" x2="1254" y2="483.5"/>
</g>
<g fill="#243b58">
<path d="M867 483.5 L883 479.5 L883 487.5 Z"/>
<path d="M1127 483.5 L1111 479.5 L1111 487.5 Z"/>
<path d="M1131 483.5 L1147 479.5 L1147 487.5 Z"/>
<path d="M1259 483.5 L1243 479.5 L1243 487.5 Z"/>
</g>
<text x="957" y="497.5" font-family="Liberation Serif" font-size="33.5" fill="#111" textLength="75" lengthAdjust="spacingAndGlyphs">2.4 m</text>
<text x="1164.5" y="523.5" font-family="Liberation Serif" font-size="33.5" fill="#111" textLength="72" lengthAdjust="spacingAndGlyphs">1.2 m</text>
<!-- cross section -->
<rect x="1317.5" y="347.5" width="30" height="82.5" fill="#ab9d95" stroke="#4b6180" stroke-width="1.6"/>
<g stroke="#7d5a46" stroke-width="0.8" fill="none" opacity="0.8">
<path d="M1321 350 C1325 365 1330 375 1335 395 C1338 405 1340 420 1345 428"/>
<path d="M1328 349 C1332 360 1340 370 1346 380"/>
<path d="M1319 385 C1325 382 1335 395 1340 388 C1343 384 1346 390 1347 395"/>
<path d="M1320 410 C1327 405 1333 415 1338 400"/>
<path d="M1336 350 C1338 360 1344 365 1346 372"/>
<path d="M1322 428 C1325 415 1330 410 1332 395"/>
</g>
<g stroke="#6e849c" stroke-width="1.6">
<line x1="1317.5" y1="312" x2="1317.5" y2="338"/>
<line x1="1347" y1="312" x2="1347" y2="338"/>
<line x1="1355" y1="347.5" x2="1382" y2="347.5"/>
<line x1="1355" y1="429.5" x2="1382" y2="429.5"/>
</g>
<g stroke="#a3bccb" stroke-width="3.2">
<line x1="1285" y1="323" x2="1304" y2="323"/>
<line x1="1360" y1="323" x2="1379" y2="323"/>
</g>
<line x1="1370" y1="355" x2="1370" y2="423" stroke="#3f5a78" stroke-width="1.6"/>
<g fill="#243b58">
<path d="M1314 323 L1300 319.5 L1300 326.5 Z"/>
<path d="M1350 323 L1364 319.5 L1364 326.5 Z"/>
<path d="M1370 350 L1366.5 364 L1373.5 364 Z"/>
<path d="M1370 428 L1366.5 414 L1373.5 414 Z"/>
</g>
<text x="1325" y="308" font-family="Liberation Serif" font-style="italic" font-size="32" fill="#1a1a1a">b</text>
<text x="1392.5" y="405.5" font-family="Liberation Serif" font-size="34" fill="#111" textLength="102.5" lengthAdjust="spacingAndGlyphs">150 mm</text>
</svg>
<!-- status -->
<div class="a" style="left:0;top:898px;width:1600px;height:1px;background:#54575c"></div>
<div class="a" style="left:0;top:899px;width:1600px;height:1px;background:#e9eaec"></div>

<div class="a" style="left:77px;top:879px;width:1px;height:18px;background:#a7adb6;box-shadow:1px 0 0 #f4f5f7"></div>
<div class="a" style="left:143px;top:879px;width:1px;height:18px;background:#a7adb6;box-shadow:1px 0 0 #f4f5f7"></div>
<div class="a" style="left:177px;top:879px;width:1px;height:18px;background:#a7adb6;box-shadow:1px 0 0 #f4f5f7"></div>
<div class="a" style="left:1322px;top:879px;width:1px;height:18px;background:#a7adb6;box-shadow:1px 0 0 #f4f5f7"></div>
<div class="a" style="left:1327px;top:879px;width:19px;height:19px;border:1px solid #d9ad45;border-radius:3px;background:linear-gradient(180deg,#fde9a4,#fcd874 60%,#fde37f)"></div>
<svg class="a" style="left:0;top:877px" width="1600" height="23" viewBox="0 877 1600 23">
<path d="M151 889.5 L157 886 L165.5 889 L159.5 892.5 Z" fill="#fbfbfd" stroke="#5a78b0" stroke-width="0.7"/>
<path d="M151 889.5 L151 891.5 L159.5 895 L165.5 891 L165.5 889 L159.5 892.5 Z" fill="#3f74d2" stroke="#24509c" stroke-width="0.6"/>
<path d="M155.5 885.5 L158.5 888.5 L165 880" fill="none" stroke="#2b66cc" stroke-width="2"/>
<rect x="1331.5" y="882.5" width="11" height="12" fill="#fff" stroke="#333" stroke-width="1"/>
<g stroke="#444" stroke-width="1"><line x1="1333" y1="885.5" x2="1341" y2="885.5"/><line x1="1333" y1="887.5" x2="1341" y2="887.5"/><line x1="1333" y1="889.5" x2="1341" y2="889.5"/><line x1="1333" y1="891.5" x2="1341" y2="891.5"/></g>
<path d="M1350.5 883.5 L1355.5 884.5 L1360.5 883.5 L1360.5 893.5 L1355.5 894.5 L1350.5 893.5 Z" fill="#fff" stroke="#444" stroke-width="1"/>
<line x1="1355.5" y1="884.5" x2="1355.5" y2="896" stroke="#444"/>
<rect x="1367.5" y="883.5" width="10" height="9" fill="#fff" stroke="#444" stroke-width="1"/>
<g stroke="#666" stroke-width="1"><line x1="1369" y1="886.5" x2="1376" y2="886.5"/><line x1="1369" y1="888.5" x2="1374" y2="888.5"/></g>
<circle cx="1377" cy="893" r="3" fill="#2e8a3e"/><circle cx="1376.5" cy="892.5" r="1.6" fill="#3a78d8"/>
<g stroke="#666" stroke-width="1"><line x1="1387" y1="884.5" x2="1389" y2="884.5"/><line x1="1391" y1="884.5" x2="1396" y2="884.5"/><line x1="1389" y1="887.5" x2="1396" y2="887.5"/><line x1="1389" y1="890.5" x2="1396" y2="890.5"/><line x1="1387" y1="893.5" x2="1389" y2="893.5"/><line x1="1391" y1="893.5" x2="1396" y2="893.5"/></g>
<g stroke="#555" stroke-width="1"><line x1="1405" y1="884.5" x2="1415" y2="884.5"/><line x1="1405" y1="886.5" x2="1415" y2="886.5"/><line x1="1405" y1="888.5" x2="1415" y2="888.5"/><line x1="1405" y1="890.5" x2="1415" y2="890.5"/><line x1="1405" y1="892.5" x2="1415" y2="892.5"/><line x1="1405" y1="894.5" x2="1415" y2="894.5"/></g>
<circle cx="1472" cy="888" r="7" fill="#f4f5f7" stroke="#6c7078" stroke-width="1"/>
<line x1="1468" y1="888" x2="1476" y2="888" stroke="#333" stroke-width="1.8"/>
<line x1="1479" y1="887.5" x2="1580" y2="887.5" stroke="#8c9198" stroke-width="1"/>
<line x1="1479" y1="888.5" x2="1580" y2="888.5" stroke="#fafafa" stroke-width="1"/>
<line x1="1529.5" y1="884" x2="1529.5" y2="892" stroke="#9aa0a8" stroke-width="1"/>
<path d="M1531.5 882.5 L1539.5 882.5 L1539.5 890 L1535.5 894 L1531.5 890 Z" fill="#f6f7f9" stroke="#5f656e" stroke-width="1"/>
<circle cx="1587.5" cy="888" r="7" fill="#f4f5f7" stroke="#6c7078" stroke-width="1"/>
<line x1="1583.5" y1="888" x2="1591.5" y2="888" stroke="#333" stroke-width="1.8"/>
<line x1="1587.5" y1="884" x2="1587.5" y2="892" stroke="#333" stroke-width="1.8"/>
</svg>
<div class="st" style="left:8px">Page: 1 of 1</div>
<div class="st" style="left:87px">Words: 0</div>
<div class="st" style="left:1428px">144%</div>
</body></html>
